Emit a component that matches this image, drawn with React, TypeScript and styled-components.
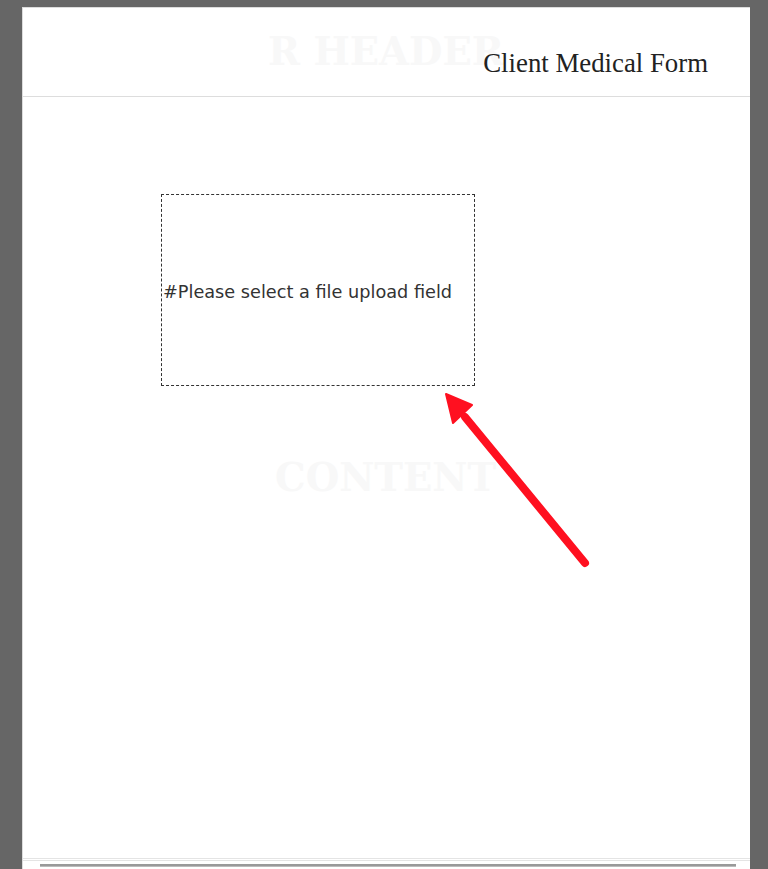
import React from "react";
import styled, { createGlobalStyle } from "styled-components";

const GlobalStyle = createGlobalStyle`
  html, body {
    margin: 0;
    padding: 0;
    background: #666666;
    height: 100%;
  }
  #root {
    min-height: 100%;
  }
`;

const App: React.FC = () => {
    return (
        <>
            <GlobalStyle />
            <Sheet>
                <Header>
                    <Watermark $top={21} $left={245}>R HEADER</Watermark>
                    <FormTitle>Client Medical Form</FormTitle>
                </Header>

                <Content>
                    <Watermark $top={358} $left={252}>CONTENT</Watermark>
                    <UploadBox>
                        <UploadText>#Please select a file upload field</UploadText>
                    </UploadBox>
                    <Arrow width="160" height="190" viewBox="0 0 160 190">
                        <line x1="150" y1="178" x2="30" y2="32" stroke="#ff1020" strokeWidth="8" strokeLinecap="round" />
                        <polygon points="11,9 37,20 18,38" fill="#ff1020" stroke="#ff1020" strokeWidth="2" strokeLinejoin="round" />
                    </Arrow>
                </Content>

                <Footer>
                    <FooterRule />
                </Footer>
            </Sheet>
        </>
    );
};

const Sheet = styled.div`
  margin: 7px 0 0 22px;
  width: 728px;
  min-height: 862px;
  background: #ffffff;
  border-left: 1px solid #dcdcdc;
  border-top: 1px solid #dcdcdc;
  box-sizing: border-box;
  display: flex;
  flex-direction: column;
`;

const Header = styled.header`
  position: relative;
  height: 89px;
  border-bottom: 1px solid #dddddd;
  display: flex;
  align-items: flex-end;
  justify-content: flex-end;
  padding: 0 42px 18px 0;
  box-sizing: border-box;
  overflow: hidden;
`;

const Watermark = styled.div<{ $top: number; $left: number }>`
  position: absolute;
  top: ${(p) => p.$top}px;
  left: ${(p) => p.$left}px;
  font-family: "DejaVu Serif", "Liberation Serif", serif;
  font-weight: 700;
  font-size: 38.5px;
  color: #f8f8f8;
  white-space: nowrap;
  user-select: none;
`;

const FormTitle = styled.h1`
  position: relative;
  margin: 0;
  font-family: "Liberation Serif", "Times New Roman", serif;
  font-weight: 400;
  font-size: 26.8px;
  line-height: 30px;
  color: #222222;
`;

const Content = styled.main`
  position: relative;
  height: 761px;
  padding: 97px 0 0 138px;
  box-sizing: border-box;
`;

const UploadBox = styled.div`
  position: relative;
  width: 314px;
  height: 192px;
  border: 1px dashed #333333;
  box-sizing: border-box;
  display: flex;
  align-items: center;
  padding: 3px 0 0 1px;
`;

const UploadText = styled.span`
  font-family: "DejaVu Sans", Verdana, sans-serif;
  font-size: 17.7px;
  color: #333333;
  white-space: nowrap;
`;

const Arrow = styled.svg`
  position: absolute;
  left: 412px;
  top: 288px;
`;

const Footer = styled.footer`
  border-top: 3px double #e4e4e4;
  padding: 3px 14px 0 17px;
  height: 10px;
  box-sizing: border-box;
`;

const FooterRule = styled.div`
  height: 2px;
  background: #999999;
  border-bottom: 1px solid #bbbbbb;
`;

export default App;
